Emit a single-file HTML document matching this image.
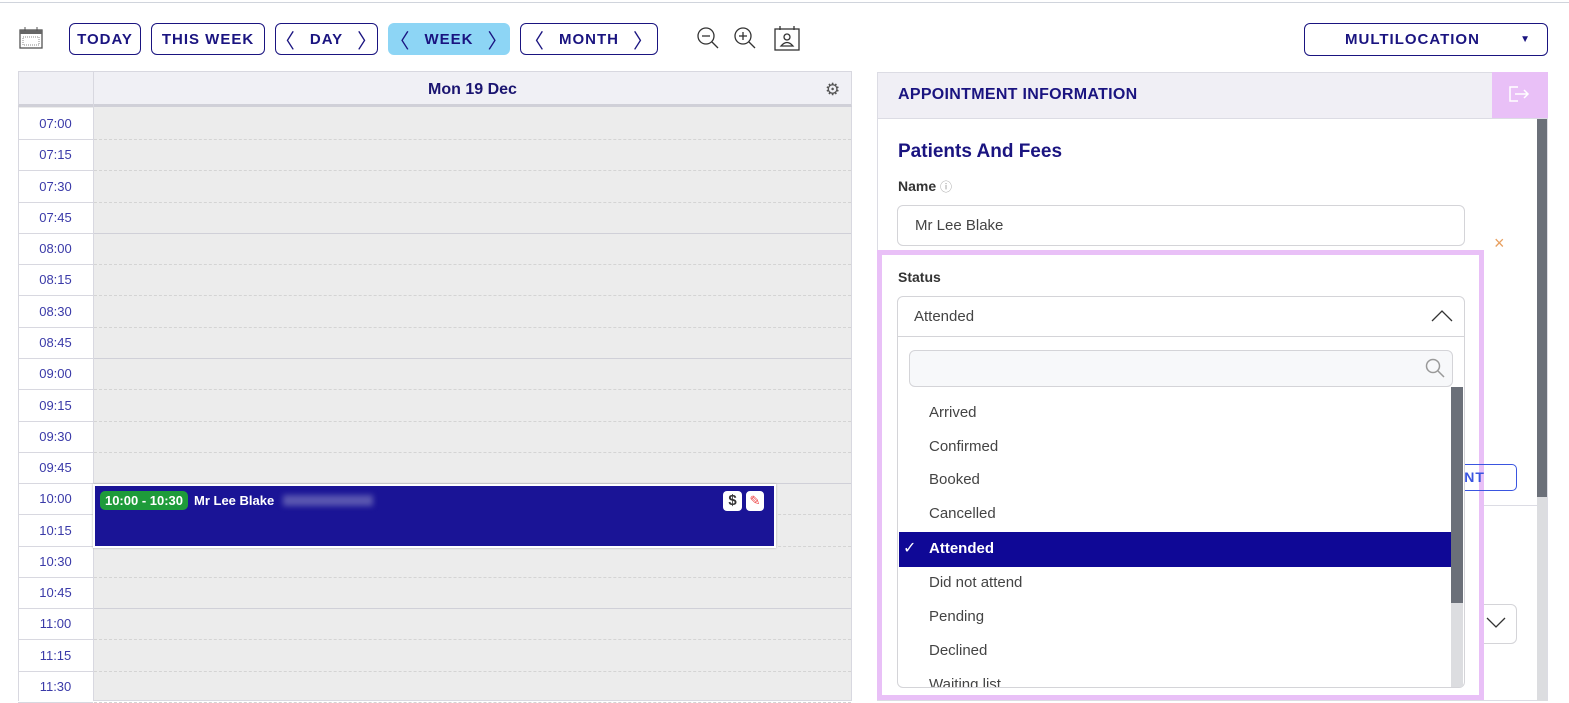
<!DOCTYPE html>
<html><head><style>
*{box-sizing:border-box;margin:0;padding:0}
body{width:1569px;height:701px;overflow:hidden;background:#fff;font-family:"Liberation Sans",sans-serif;position:relative;color:#1a1a80}
.abs{position:absolute}
.btn{position:absolute;top:23px;height:32px;border:1.5px solid #1a1480;border-radius:6px;color:#1a1480;font-size:15px;font-weight:bold;letter-spacing:1px;display:flex;align-items:center;justify-content:center;gap:14px}
.btn span.ch{font-weight:normal;font-size:20px;color:#1a1480}
.tl{position:absolute;left:0;width:75px;text-align:center;font-size:13px;color:#3a3aa8}
.item{position:absolute;left:929px;font-size:15px;color:#444}
</style></head><body>
<div class="abs" style="left:0;top:2px;width:1569px;height:1px;background:#d0d4dc"></div>
<svg class="abs" style="left:19px;top:27px" width="24" height="22" viewBox="0 0 24 22"><rect x="1" y="3" width="22" height="18" fill="none" stroke="#555" stroke-width="1.3"/><rect x="1" y="3" width="22" height="4" fill="#666"/><line x1="6" y1="0" x2="6" y2="4" stroke="#555"/><line x1="18" y1="0" x2="18" y2="4" stroke="#555"/><rect x="4" y="10" width="16" height="8" fill="none" stroke="#888" stroke-dasharray="1 1"/></svg>
<div class="btn" style="left:69px;width:72px">TODAY</div>
<div class="btn" style="left:151px;width:114px">THIS WEEK</div>
<div class="btn" style="left:275px;width:103px"><span class="ch">〈</span>DAY<span class="ch">〉</span></div>
<div class="btn" style="left:388px;width:122px;background:#8dd5f5;border-color:#8dd5f5"><span class="ch">〈</span>WEEK<span class="ch">〉</span></div>
<div class="btn" style="left:520px;width:138px"><span class="ch">〈</span>MONTH<span class="ch">〉</span></div>
<svg class="abs" style="left:696px;top:26px" width="110" height="26" viewBox="0 0 110 26"><g fill="none" stroke="#333" stroke-width="1.3"><circle cx="10" cy="10" r="8"/><line x1="16" y1="16" x2="22" y2="22"/><line x1="6" y1="10" x2="14" y2="10"/><circle cx="47" cy="10" r="8"/><line x1="53" y1="16" x2="59" y2="22"/><line x1="43" y1="10" x2="51" y2="10"/><line x1="47" y1="6" x2="47" y2="14"/><rect x="79" y="3" width="24" height="21"/><circle cx="91" cy="11" r="3"/><path d="M85 20 q6 -7 12 0 z"/><line x1="84" y1="0" x2="84" y2="4"/><line x1="98" y1="0" x2="98" y2="4"/></g></svg>
<div class="btn" style="left:1304px;width:244px;top:23px;height:33px;justify-content:flex-start;padding-left:40px">MULTILOCATION<span style="position:absolute;right:16px;font-size:10px">▼</span></div>

<div class="abs" style="left:18px;top:71px;width:834px;height:630px;border:1px solid #d8d8e0;background:#ececec"></div>
<div class="abs" style="left:18px;top:71px;width:834px;height:36px;background:#f0f0f5;border:1px solid #d8d8e0;border-bottom:3px solid #d0d0d8"></div>
<div class="abs" style="left:93px;top:71px;width:1px;height:630px;background:#d8d8e0"></div>
<div class="abs" style="left:19px;top:108px;width:74px;height:593px;background:#fff"></div>
<div class="abs" style="left:94px;top:81px;width:757px;text-align:center;font-size:16px;font-weight:bold;color:#1a1470">Mon 19 Dec</div>
<div class="abs" style="left:825px;top:80px;font-size:17px;color:#555">⚙</div>
<div id="rows"></div>
<script>
var t=["07:00","07:15","07:30","07:45","08:00","08:15","08:30","08:45","09:00","09:15","09:30","09:45","10:00","10:15","10:30","10:45","11:00","11:15","11:30"];
var h="";
for(var i=0;i<t.length;i++){var y=108+i*31.28;
h+='<div class="tl" style="left:18px;top:'+(y+8)+'px">'+t[i]+'</div>';
h+='<div class="abs" style="left:18px;top:'+(y+31)+'px;width:75px;height:1px;background:#d8d8e0"></div>';
var hour=(i%4==3);
h+='<div class="abs" style="left:94px;top:'+(y+31)+'px;width:757px;height:0;border-top:1px '+(hour?'solid #d0d0d8':'dashed #d4d4d4')+'"></div>';}
document.getElementById('rows').innerHTML=h;
</script>
<div class="abs" style="left:93px;top:484px;width:683px;height:64px;background:#1a1496;border:2px solid #fff;box-shadow:0 0 2px #aaa"></div>
<div class="abs" style="left:100px;top:491px;width:88px;height:19px;background:#1e9b3a;border-radius:5px;color:#fff;font-size:13px;font-weight:bold;text-align:center;line-height:19px">10:00 - 10:30</div>
<div class="abs" style="left:194px;top:493px;color:#fff;font-size:13px;font-weight:bold">Mr Lee Blake</div>
<div class="abs" style="left:283px;top:495px;width:90px;height:11px;background:#5a57b0;filter:blur(3px)"></div>
<div class="abs" style="left:723px;top:491px;width:19px;height:20px;background:#fff;border-radius:4px;color:#333;font-size:15px;font-weight:bold;text-align:center;line-height:20px">$</div>
<div class="abs" style="left:746px;top:491px;width:18px;height:20px;background:#fff;border-radius:4px;color:#e44;font-size:13px;text-align:center;line-height:20px">✎</div>

<div class="abs" style="left:877px;top:72px;width:671px;height:629px;border:1px solid #dcdce4;background:#fff"></div>
<div class="abs" style="left:877px;top:72px;width:671px;height:47px;background:#f0eff5;border:1px solid #dcdce4"></div>
<div class="abs" style="left:898px;top:86px;font-size:16px;font-weight:bold;color:#1a1480;letter-spacing:.3px">APPOINTMENT INFORMATION</div>
<div class="abs" style="left:1492px;top:72px;width:56px;height:46px;background:#e9c0f7"></div>
<svg class="abs" style="left:1508px;top:85px" width="22" height="18" viewBox="0 0 22 18"><g fill="none" stroke="#fff" stroke-width="1.5"><path d="M10 2H2v14h8"/><line x1="7" y1="9" x2="20" y2="9"/><path d="M16 5l4 4-4 4"/></g></svg>
<div class="abs" style="left:1537px;top:119px;width:10px;height:582px;background:#dcdde0"></div>
<div class="abs" style="left:1537px;top:119px;width:10px;height:378px;background:#6b7079"></div>
<div class="abs" style="left:898px;top:141px;font-size:19px;font-weight:bold;color:#1a1480">Patients And Fees</div>
<div class="abs" style="left:898px;top:178px;font-size:14px;font-weight:bold;color:#333">Name <span style="font-weight:normal;color:#999;font-size:12px">ⓘ</span></div>
<div class="abs" style="left:897px;top:205px;width:568px;height:41px;border:1px solid #d4d4d8;border-radius:6px;padding-left:17px;line-height:39px;font-size:15px;color:#444">Mr Lee Blake</div>
<div class="abs" style="left:1494px;top:233px;font-size:18px;color:#e8a060">×</div>
<div class="abs" style="left:877px;top:505px;width:660px;height:1px;background:#dcdce4"></div>
<div class="abs" style="left:1440px;top:604px;width:77px;height:40px;border:1px solid #d4d4d8;border-radius:6px"></div>
<svg class="abs" style="left:1485px;top:616px" width="22" height="14"><path d="M2 2l9 9 9-9" fill="none" stroke="#333" stroke-width="1.3"/></svg>

<div class="abs" style="left:877px;top:250px;width:607px;height:450px;border:5px solid #e9c0f7;background:#fff"></div>
<div class="abs" style="left:1440px;top:464px;width:77px;height:27px;border:1.5px solid #3a55e0;border-radius:5px;color:#3a55e0;font-size:14px;font-weight:bold;line-height:24px;padding-left:8px;letter-spacing:1px;background:transparent">IENT</div>
<div class="abs" style="left:898px;top:269px;font-size:14px;font-weight:bold;color:#333">Status</div>
<div class="abs" style="left:897px;top:296px;width:568px;height:392px;border:1px solid #d4d4d8;border-radius:6px;background:#fff"></div>
<div class="abs" style="left:914px;top:308px;font-size:15px;color:#444">Attended</div>
<svg class="abs" style="left:1430px;top:308px" width="24" height="16"><path d="M2 13l10-10 10 10" fill="none" stroke="#333" stroke-width="1.3"/></svg>
<div class="abs" style="left:897px;top:336px;width:568px;height:1px;background:#d4d4d8"></div>
<div class="abs" style="left:909px;top:350px;width:544px;height:37px;border:1px solid #d4d4d8;border-radius:6px;background:#f7f8fa"></div>
<svg class="abs" style="left:1424px;top:357px" width="22" height="22"><g fill="none" stroke="#999" stroke-width="1.5"><circle cx="9" cy="9" r="6.5"/><line x1="14" y1="14" x2="20" y2="20"/></g></svg>
<div class="abs" style="left:1451px;top:387px;width:12px;height:300px;background:#dcdde0"></div>
<div class="abs" style="left:1451px;top:387px;width:12px;height:216px;background:#6b7079"></div>
<div class="abs" style="left:899px;top:532px;width:552px;height:35px;background:#0f0896"></div>
<div class="abs" style="left:903px;top:538px;color:#fff;font-size:16px">✓</div>
<div class="item" style="top:404px">Arrived</div>
<div class="item" style="top:438px">Confirmed</div>
<div class="item" style="top:471px">Booked</div>
<div class="item" style="top:505px">Cancelled</div>
<div class="item" style="top:540px;color:#fff;font-weight:bold">Attended</div>
<div class="item" style="top:574px">Did not attend</div>
<div class="item" style="top:608px">Pending</div>
<div class="item" style="top:642px">Declined</div>
<div class="abs" style="left:899px;top:676px;width:552px;height:11px;overflow:hidden"><div style="position:absolute;left:30px;top:0;font-size:15px;color:#444">Waiting list</div></div>
</body></html>
